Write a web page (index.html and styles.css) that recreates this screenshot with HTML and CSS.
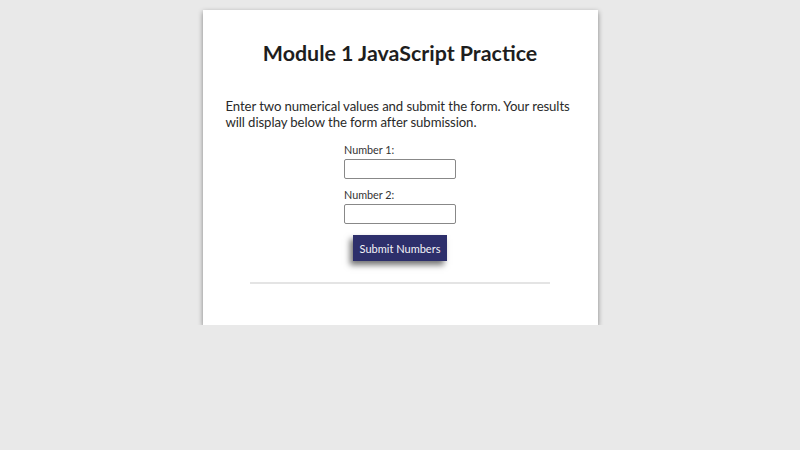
FILE: index.html
```html
<!DOCTYPE html>
<html lang="en">
<head>
<meta charset="utf-8">
<title>Module 1 JavaScript Practice</title>
<link rel="stylesheet" href="styles.css">
</head>
<body>
<main class="card">
  <h1 class="title">Module 1 JavaScript Practice</h1>
  <p class="intro">Enter two numerical values and submit the form. Your results will display below the form after submission.</p>
  <form class="form">
    <label class="label" for="n1">Number 1:</label>
    <input class="field" id="n1" type="text">
    <label class="label" for="n2">Number 2:</label>
    <input class="field" id="n2" type="text">
    <button class="btn" type="button">Submit Numbers</button>
  </form>
  <hr class="rule">
</main>
</body>
</html>
```
FILE: styles.css
```css
html, body {
  margin: 0;
  padding: 0;
}
body {
  background: #e9e9e9;
  font-family: "Lato", "Open Sans", sans-serif;
  color: #222;
}
.card {
  width: 395px;
  height: 315px;
  box-sizing: border-box;
  margin: 10px auto 0;
  background: #fff;
  box-shadow: 0 2px 5px rgba(0,0,0,0.45);
  padding: 28px 23px 0;
  display: flex;
  flex-direction: column;
}
.title {
  margin: 0;
  text-align: center;
  font-size: 21.4px;
  font-weight: 700;
  color: #1e1e1e;
  line-height: 30px;
}
.intro {
  margin: 30px 0 0;
  font-size: 13.2px;
  letter-spacing: -0.1px;
  line-height: 16px;
  color: #2a2a2a;
}
.form {
  display: flex;
  flex-direction: column;
  align-items: flex-start;
  width: 112px;
  align-self: center;
  margin-top: 13px;
}
.label {
  font-size: 10.8px;
  line-height: 13px;
  color: #333;
  margin-bottom: 3px;
}
.field {
  width: 112px;
  height: 20px;
  box-sizing: border-box;
  border: 1px solid #888;
  border-radius: 2px;
  margin: 0 0 9px;
  padding: 0 4px;
}
.field + .label + .field {
  margin-bottom: 11px;
}
.btn {
  align-self: center;
  width: 94px;
  height: 26px;
  padding: 0;
  white-space: nowrap;
  background: #2d2f6b;
  color: #f4f4f8;
  border: none;
  font-family: "Lato", "Open Sans", sans-serif;
  font-size: 11px;
  box-shadow: -3px 4px 6px rgba(0,0,0,0.55);
  cursor: pointer;
}
.rule {
  width: 300px;
  margin: 21px auto 0;
  border: none;
  height: 2px;
  background: #e4e4e4;
}
```
